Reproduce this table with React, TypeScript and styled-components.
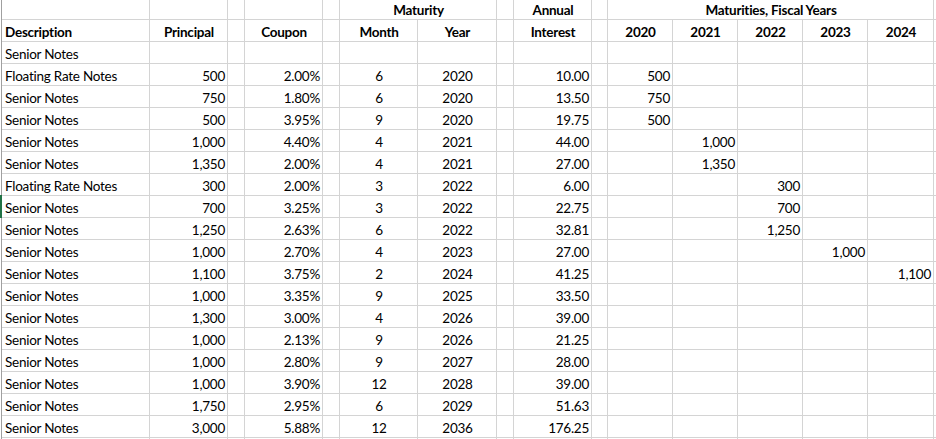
import React from "react";
import styled, { createGlobalStyle, css } from "styled-components";

const Global = createGlobalStyle`
  html, body { margin: 0; padding: 0; background: #ffffff; }
  body { font-family: Lato, "Open Sans", sans-serif; color: #000; }
`;

const Sheet = styled.div`
  width: 936px;
  height: 439px;
  overflow: hidden;
  background: #ffffff;
  padding-left: 1px;
  box-sizing: border-box;
`;

const Grid = styled.div`
  display: grid;
  grid-template-columns: 147px 77px 16px 77px 16px 77px 78px 16px 77px 15px 64px 64px 64px 64px 65px 1fr;
  grid-template-rows: 19px repeat(18, 21px) 21px 21px 21px;
  gap: 1px;
  background: #d4d4d4;
  border-left: 1px solid #a0a0a0;
`;

type Align = "left" | "right" | "center";

const Cell = styled.div<{ $align?: Align; $bold?: boolean; $span?: number; $mark?: boolean }>`
  background: #ffffff;
  display: flex;
  align-items: flex-end;
  justify-content: ${(p) =>
    p.$align === "right" ? "flex-end" : p.$align === "center" ? "center" : "flex-start"};
  padding: 0 2px 1px 3px;
  box-sizing: border-box;
  font-size: 13.5px;
  letter-spacing: -0.25px;
  line-height: 16px;
  font-weight: ${(p) => (p.$bold ? 700 : 400)};
  white-space: nowrap;
  overflow: visible;
  min-width: 0;
  position: relative;
  ${(p) => p.$span && css`grid-column: span ${p.$span};`}
  ${(p) =>
    p.$mark &&
    css`
      &::before {
        content: "";
        position: absolute;
        left: -2px;
        top: -1px;
        bottom: -1px;
        width: 2px;
        background: #217346;
      }
    `}
`;

type Row = {
  d: string;
  p?: string;
  c?: string;
  m?: string;
  y?: string;
  i?: string;
  fy?: number;
  fv?: string;
};

const rows: Row[] = [
  { d: "Senior Notes" },
  { d: "Floating Rate Notes", p: "500", c: "2.00%", m: "6", y: "2020", i: "10.00", fy: 0, fv: "500" },
  { d: "Senior Notes", p: "750", c: "1.80%", m: "6", y: "2020", i: "13.50", fy: 0, fv: "750" },
  { d: "Senior Notes", p: "500", c: "3.95%", m: "9", y: "2020", i: "19.75", fy: 0, fv: "500" },
  { d: "Senior Notes", p: "1,000", c: "4.40%", m: "4", y: "2021", i: "44.00", fy: 1, fv: "1,000" },
  { d: "Senior Notes", p: "1,350", c: "2.00%", m: "4", y: "2021", i: "27.00", fy: 1, fv: "1,350" },
  { d: "Floating Rate Notes", p: "300", c: "2.00%", m: "3", y: "2022", i: "6.00", fy: 2, fv: "300" },
  { d: "Senior Notes", p: "700", c: "3.25%", m: "3", y: "2022", i: "22.75", fy: 2, fv: "700" },
  { d: "Senior Notes", p: "1,250", c: "2.63%", m: "6", y: "2022", i: "32.81", fy: 2, fv: "1,250" },
  { d: "Senior Notes", p: "1,000", c: "2.70%", m: "4", y: "2023", i: "27.00", fy: 3, fv: "1,000" },
  { d: "Senior Notes", p: "1,100", c: "3.75%", m: "2", y: "2024", i: "41.25", fy: 4, fv: "1,100" },
  { d: "Senior Notes", p: "1,000", c: "3.35%", m: "9", y: "2025", i: "33.50" },
  { d: "Senior Notes", p: "1,300", c: "3.00%", m: "4", y: "2026", i: "39.00" },
  { d: "Senior Notes", p: "1,000", c: "2.13%", m: "9", y: "2026", i: "21.25" },
  { d: "Senior Notes", p: "1,000", c: "2.80%", m: "9", y: "2027", i: "28.00" },
  { d: "Senior Notes", p: "1,000", c: "3.90%", m: "12", y: "2028", i: "39.00" },
  { d: "Senior Notes", p: "1,750", c: "2.95%", m: "6", y: "2029", i: "51.63" },
  { d: "Senior Notes", p: "3,000", c: "5.88%", m: "12", y: "2036", i: "176.25" },
];

const years = ["2020", "2021", "2022", "2023", "2024"];

export default function App() {
  return (
    <>
      <Global />
      <Sheet>
        <Grid>
          {/* header row 1 */}
          <Cell />
          <Cell />
          <Cell />
          <Cell />
          <Cell />
          <Cell $span={2} $align="center" $bold>
            Maturity
          </Cell>
          <Cell />
          <Cell $align="center" $bold>
            Annual
          </Cell>
          <Cell />
          <Cell $span={5} $align="center" $bold>
            Maturities, Fiscal Years
          </Cell>
          <Cell />

          {/* header row 2 */}
          <Cell $bold>Description</Cell>
          <Cell $align="center" $bold>
            Principal
          </Cell>
          <Cell />
          <Cell $align="center" $bold>
            Coupon
          </Cell>
          <Cell />
          <Cell $align="center" $bold>
            Month
          </Cell>
          <Cell $align="center" $bold>
            Year
          </Cell>
          <Cell />
          <Cell $align="center" $bold>
            Interest
          </Cell>
          <Cell />
          {years.map((y) => (
            <Cell key={y} $align="center" $bold>
              {y}
            </Cell>
          ))}
          <Cell />

          {rows.map((r, idx) => (
            <React.Fragment key={idx}>
              <Cell $mark={idx === 7}>{r.d}</Cell>
              <Cell $align="right">{r.p}</Cell>
              <Cell />
              <Cell $align="right">{r.c}</Cell>
              <Cell />
              <Cell $align="center">{r.m}</Cell>
              <Cell $align="center">{r.y}</Cell>
              <Cell />
              <Cell $align="right">{r.i}</Cell>
              <Cell />
              {years.map((_, k) => (
                <Cell key={k} $align="right">
                  {r.fy === k ? r.fv : ""}
                </Cell>
              ))}
              <Cell />
            </React.Fragment>
          ))}
          {Array.from({ length: 16 }).map((_, k) => (
            <Cell key={"e" + k} />
          ))}
        </Grid>
      </Sheet>
    </>
  );
}
